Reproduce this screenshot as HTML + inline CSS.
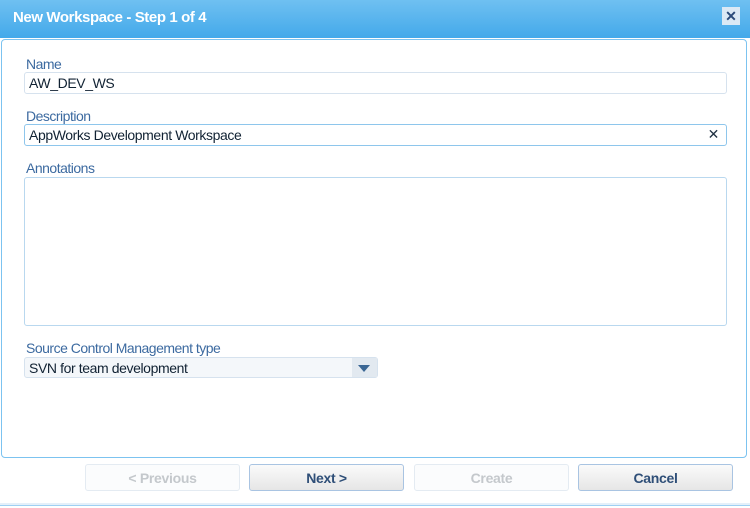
<!DOCTYPE html><html><head><style>
body{margin:0;width:750px;height:508px;background:#fff;font-family:"Liberation Sans",sans-serif;position:relative;overflow:hidden}
.t{position:absolute;left:0;top:0;width:750px;height:38px;background:linear-gradient(#6fc0f1,#43a9ea)}
.t span{position:absolute;left:13px;top:9px;color:#fff;font-weight:bold;font-size:15px;letter-spacing:-0.4px}
.x{position:absolute;left:722px;top:7px;width:18px;height:18px;background:#dbe9f5;color:#2a4a7a;font-weight:bold;font-size:14px;text-align:center;line-height:18px}
.p{position:absolute;left:1px;top:39px;width:744px;height:417px;border:1px solid #7cc3f0;border-radius:4px}
.l{position:absolute;left:26px;color:#3c6aa0;font-size:14px;letter-spacing:-0.5px}
.i{position:absolute;left:24px;width:703px;border:1px solid #d6e2ee;border-radius:3px;background:#fff;font-size:14px;color:#123;box-sizing:border-box;padding:2px 4px;letter-spacing:-0.4px}
.b{position:absolute;top:464px;width:155px;height:27px;box-sizing:border-box;border-radius:3px;text-align:center;line-height:26px;font-weight:bold;font-size:14px;letter-spacing:-0.3px}
.on{border:1px solid #a9c4e2;background:linear-gradient(#fafafa,#e6e6e6);color:#2f4f78}
.off{border:1px solid #e4ebf2;background:#fbfcfd;color:#c4c8cc}
</style></head><body>
<div class="t"><span>New Workspace - Step 1 of 4</span><div class="x">✕</div></div>
<div class="p"></div>
<div class="l" style="top:56px">Name</div>
<div class="i" style="top:72px;height:22px">AW_DEV_WS</div>
<div class="l" style="top:108px">Description</div>
<div class="i" style="top:124px;height:22px;border-color:#8ec6ec">AppWorks Development Workspace<span style="position:absolute;right:7px;top:1px;color:#234;font-size:14px">✕</span></div>
<div class="l" style="top:160px">Annotations</div>
<div class="i" style="top:177px;height:149px;border-color:#b9d8ef"></div>
<div class="l" style="top:340px">Source Control Management type</div>
<div class="i" style="top:357px;height:21px;width:354px;background:#f4f7fa;padding-top:2px">SVN for team development<div style="position:absolute;right:0;top:0;width:25px;height:19px;background:#e2e9f0"><div style="position:absolute;left:6px;top:7px;border-left:6px solid transparent;border-right:6px solid transparent;border-top:7px solid #3a6694"></div></div></div>
<div class="b off" style="left:85px">&lt; Previous</div>
<div class="b on" style="left:249px">Next &gt;</div>
<div class="b off" style="left:414px">Create</div>
<div class="b on" style="left:578px">Cancel</div>
<div style="position:absolute;left:0;top:503px;width:750px;height:2px;background:#e4f0fa;border-bottom:1px solid #9fd0f3"></div>
</body></html>
